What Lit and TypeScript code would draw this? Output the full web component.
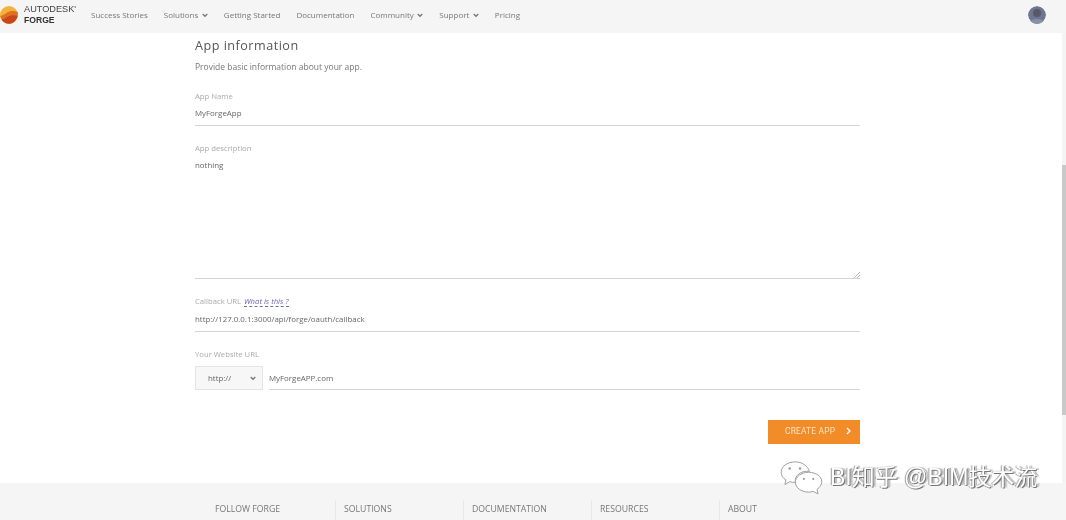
import { LitElement, html, css } from 'lit';
import { customElement } from 'lit/decorators.js';

const NAV = [
  { label: 'Success Stories', menu: false },
  { label: 'Solutions', menu: true },
  { label: 'Getting Started', menu: false },
  { label: 'Documentation', menu: false },
  { label: 'Community', menu: true },
  { label: 'Support', menu: true },
  { label: 'Pricing', menu: false },
];

const FOOTER = ['FOLLOW FORGE', 'SOLUTIONS', 'DOCUMENTATION', 'RESOURCES', 'ABOUT'];

@customElement('app-root')
export class AppRoot extends LitElement {
  static styles = css`
    :host {
      display: block;
      position: relative;
      height: 520px;
      overflow: hidden;
      background: #fff;
      font-family: 'Open Sans', Roboto, sans-serif;
      color: #666;
      filter: blur(0.35px);
    }
    .header {
      display: flex;
      align-items: center;
      box-sizing: border-box;
      height: 33px;
      padding-bottom: 4px;
      background: #f5f5f5;
    }
    .logo {
      display: flex;
      align-items: center;
      gap: 6px;
      width: 91px;
      flex: none;
    }
    .brand {
      display: flex;
      flex-direction: column;
      font-family: 'Liberation Sans', sans-serif;
      font-size: 9.2px;
      line-height: 11px;
      color: #444;
    }
    .brand b {
      font-size: 8.6px;
      color: #333;
    }
    .nav {
      display: flex;
      gap: 16px;
      font-size: 8px;
      color: #777;
    }
    .nav span {
      display: flex;
      align-items: center;
      gap: 3.5px;
      white-space: nowrap;
    }
    .nav svg {
      margin-top: 2px;
    }
    .avatar {
      margin-left: auto;
      margin-right: 20px;
      width: 18px;
      height: 18px;
      border-radius: 50%;
      display: block;
    }
    .form {
      box-sizing: border-box;
      width: 665px;
      height: 450px;
      margin-left: 195px;
      padding-top: 4px;
      display: flex;
      flex-direction: column;
    }
    h1 {
      margin: 0;
      font-size: 12.6px;
      line-height: 18px;
      font-weight: 400;
      letter-spacing: 0.5px;
      color: #555;
    }
    .lead {
      margin: 6px 0 0;
      font-size: 8.5px;
      line-height: 12px;
      color: #777;
    }
    .label {
      font-size: 7.7px;
      line-height: 10px;
      color: #aaa;
    }
    .label a {
      margin-left: 1px;
      font-style: italic;
      color: #6a68b8;
      border-bottom: 1px dashed #6a68b8;
    }
    .value {
      font-size: 7.9px;
      line-height: 12px;
      color: #666;
    }
    .field {
      display: flex;
      flex-direction: column;
      gap: 6px;
      border-bottom: 1px solid #d4d4d4;
      padding-bottom: 6px;
    }
    .name {
      margin-top: 18px;
    }
    .desc {
      margin-top: 17px;
      height: 129px;
      position: relative;
    }
    .grip {
      position: absolute;
      right: 0;
      bottom: 0;
    }
    .callback {
      margin-top: 17px;
      gap: 7px;
    }
    .site {
      margin-top: 8px;
    }
    .site-row {
      display: flex;
      gap: 6px;
      margin-top: 4px;
    }
    .select {
      box-sizing: border-box;
      width: 68px;
      height: 24px;
      display: flex;
      align-items: center;
      justify-content: space-between;
      padding: 0 6px 0 12px;
      background: #f7f7f7;
      border: 1px solid #e4e4e4;
      font-size: 7.9px;
      color: #666;
    }
    .url {
      flex: 1;
      height: 24px;
      display: flex;
      align-items: center;
      box-sizing: border-box;
      border-bottom: 1px solid #d4d4d4;
      font-size: 7.9px;
      color: #666;
    }
    .actions {
      display: flex;
      justify-content: flex-end;
      margin-top: 30px;
    }
    .create {
      box-sizing: border-box;
      width: 92px;
      height: 24px;
      display: flex;
      align-items: center;
      gap: 11px;
      padding: 0 0 2px 17px;
      border: 0;
      background: #f28c28;
      color: #fce3c6;
      font-family: Roboto, sans-serif;
      font-size: 8.4px;
      letter-spacing: 0.2px;
    }
    .footer {
      height: 37px;
      background: #f5f5f5;
      display: flex;
      padding-left: 207px;
      box-sizing: border-box;
    }
    .col {
      width: 128px;
      box-sizing: border-box;
      padding: 3px 0 0 8px;
      font-size: 8.7px;
      line-height: 12px;
      color: #777;
      border-left: 1px solid #e8e8e8;
      margin-top: 17px;
    }
    .col:first-child {
      border-left: 0;
    }
    .scroll {
      position: absolute;
      top: 33px;
      right: 0;
      bottom: 37px;
      width: 4px;
      background: #f4f4f4;
    }
    .thumb {
      position: absolute;
      top: 132px;
      left: 0;
      right: 0;
      height: 250px;
      background: #c9c9c9;
    }
    .mark {
      position: absolute;
      left: 779px;
      top: 460px;
      display: flex;
      align-items: center;
      gap: 7px;
    }
    .mark-text {
      font-family: 'Liberation Sans', 'Noto Sans CJK SC', sans-serif;
      font-size: 23px;
      line-height: 34px;
      color: #fff;
      text-shadow: 1px 1px 0 #777, -1px 0 1px #999, 3px 0 1px #bbb;
      white-space: nowrap;
    }
  `;

  private chevron() {
    return html`<svg width="6" height="5" viewBox="0 0 6 5"><path d="M.7 1l2.300 2.300L5.300 1" fill="none" stroke="#777" stroke-width="1.300"/></svg>`;
  }

  render() {
    return html`
      <header class="header">
        <div class="logo">
          <svg width="18" height="18" viewBox="0 0 18 18">
            <circle cx="9" cy="9" r="9" fill="#f4b13c"/>
            <path d="M.2 10C4 9.500 6 6.500 9.500 5.500 12.500 4.700 15.500 5 17.800 6.500 18.300 10 16.500 14 13 16.500 8 19 2 16 .2 10z" fill="#e0701f"/>
            <path d="M1.500 13.500C5 13 7.500 10 11 9.500c2.500-.4 5-.2 6.500.5-.5 3-2.500 5.500-5 7C8 18.800 3.500 17 1.500 13.500z" fill="#c9451c"/>
          </svg>
          <div class="brand"><span>AUTODESK'</span><b>FORGE</b></div>
        </div>
        <nav class="nav">
          ${NAV.map(n => html`<span>${n.label}${n.menu ? this.chevron() : ''}</span>`)}
        </nav>
        <svg class="avatar" viewBox="0 0 18 18">
          <circle cx="9" cy="9" r="9" fill="#6f7690"/>
          <circle cx="9" cy="7" r="4" fill="#59586a"/>
          <path d="M2 16c2-4 12-4 14 0a9 9 0 0 1-14 0z" fill="#8a90a8"/>
        </svg>
      </header>
      <main class="form">
        <h1>App information</h1>
        <p class="lead">Provide basic information about your app.</p>
        <div class="field name">
          <span class="label">App Name</span>
          <span class="value">MyForgeApp</span>
        </div>
        <div class="field desc">
          <span class="label">App description</span>
          <span class="value">nothing</span>
          <svg class="grip" width="6" height="6" viewBox="0 0 6 6"><path d="M0 6l6-6M3 6l3-3" stroke="#999" stroke-width=".7"/></svg>
        </div>
        <div class="field callback">
          <span class="label">Callback URL <a>What is this ?</a></span>
          <span class="value">http://127.0.0.1:3000/api/forge/oauth/callback</span>
        </div>
        <div class="site">
          <span class="label">Your Website URL</span>
          <div class="site-row">
            <div class="select">http://${this.chevron()}</div>
            <div class="url">MyForgeAPP.com</div>
          </div>
        </div>
        <div class="actions">
          <button class="create">CREATE APP
            <svg width="6" height="8" viewBox="0 0 6 8"><path d="M1 1l3 3-3 3" fill="none" stroke="#fff" stroke-width="1.300"/></svg>
          </button>
        </div>
      </main>
      <footer class="footer">
        ${FOOTER.map(f => html`<div class="col">${f}</div>`)}
      </footer>
      <div class="scroll"><div class="thumb"></div></div>
      <div class="mark">
        <svg width="44" height="34" viewBox="0 0 46 36">
          <path d="M17 2C8 2 2 7 2 13c0 4 2 6 5 8l-1 5 5-3c2 .6 4 .8 6 .6C16 17 22 11 32 12 30 6 24 2 17 2z" fill="#fff" stroke="#999"/>
          <path d="M31 13c-8 0-14 5-14 10.500S23 34 31 34c2 0 3-.3 5-.8l5 2.800-1-5c3-2 5-5 5-8 0-5.500-6-10-14-10z" fill="#fff" stroke="#999"/>
          <circle cx="11" cy="9" r="1.300" fill="#999"/><circle cx="22" cy="9" r="1.300" fill="#999"/>
          <circle cx="26" cy="20" r="1.100" fill="#999"/><circle cx="36" cy="20" r="1.100" fill="#999"/>
        </svg>
        <div class="mark-text">BI知乎 @BIM技术流</div>
      </div>
    `;
  }
}
